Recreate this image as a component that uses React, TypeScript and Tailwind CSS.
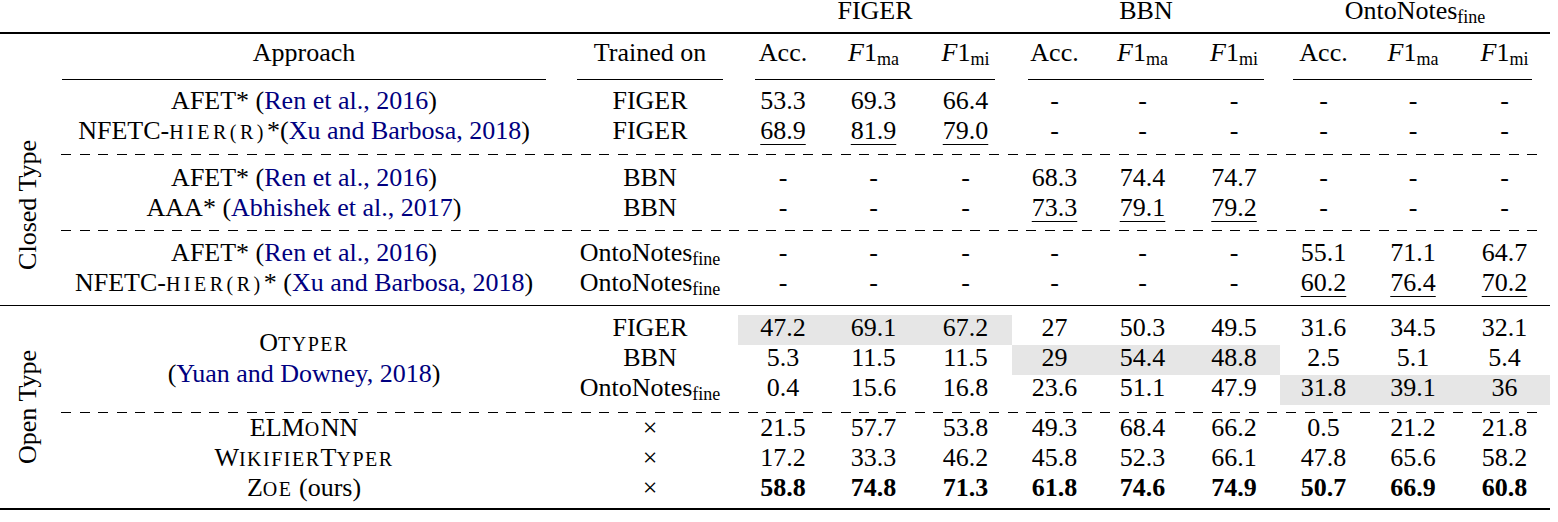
import React from 'react';

// column widths of the nine score columns (FIGER, BBN, OntoNotes_fine)
const NUM_W = ['w-[90px]', 'w-[91px]', 'w-[93px]', 'w-[85px]', 'w-[91px]', 'w-[92px]', 'w-[87px]', 'w-[92px]', 'w-[91px]'];

function Cite({ children }: { children: React.ReactNode }) {
  return <span className="text-[#000080]">{children}</span>;
}

function SC({ children, wide }: { children: React.ReactNode; wide?: boolean }) {
  return <span className={wide ? 'text-[20px] tracking-[3.5px]' : 'text-[20px] tracking-[1.5px]'}>{children}</span>;
}

function Sub({ children }: { children: React.ReactNode }) {
  return <span className="text-[18px] align-[-4px]">{children}</span>;
}

function F1({ sub }: { sub: string }) {
  return (
    <span>
      <span className="italic">F</span>1<Sub>{sub}</Sub>
    </span>
  );
}

const Onto = () => (
  <span>
    OntoNotes<Sub>fine</Sub>
  </span>
);

function Num({ v }: { v: string }) {
  if (v.startsWith('_')) return <span className="underline decoration-1 underline-offset-[5px]">{v.slice(1)}</span>;
  if (v.startsWith('*')) return <span className="font-bold">{v.slice(1)}</span>;
  return <>{v}</>;
}

function Row({ approach, trained, nums, shade }: { approach?: React.ReactNode; trained: React.ReactNode; nums: string[]; shade?: [number, number] }) {
  return (
    <div className="flex h-[30px] leading-[26px] whitespace-nowrap">
      {approach !== undefined && <div className="w-[516px] text-center">{approach}</div>}
      <div className="w-[176px] text-center">{trained}</div>
      {nums.map((v, i) => (
        <div key={i} className={`${NUM_W[i]} text-center ${shade && i >= shade[0] && i < shade[1] ? 'bg-[#e6e6e6]' : ''}`}>
          <Num v={v} />
        </div>
      ))}
    </div>
  );
}

function Dashed({ h, top }: { h: string; top: string }) {
  return (
    <div className={h}>
      <div className={`${top} ml-[15px] w-[1476px] h-px bg-[repeating-linear-gradient(90deg,#000_0px,#000_10px,transparent_10px,transparent_18.56px)]`} />
    </div>
  );
}

const dash = ['-', '-', '-'];

export default function App() {
  return (
    <div className="w-[1550px] bg-white text-black text-[26px] font-['Liberation_Serif',serif]">
      {/* dataset groups */}
      <div className="flex h-[32px] leading-[22px]">
        <div className="w-[738px]" />
        <div className="w-[274px] text-center">FIGER</div>
        <div className="w-[268px] text-center">BBN</div>
        <div className="w-[270px] text-center">
          <Onto />
        </div>
      </div>
      <div className="h-[2px] bg-black" />

      {/* column titles */}
      <div className="pt-[6px] pb-[9px]">
        <div className="flex h-[30px] leading-[26px]">
          <div className="w-[46px]" />
          <div className="w-[516px] text-center">Approach</div>
          <div className="w-[176px] text-center">Trained on</div>
          {[0, 1, 2].map((g) => (
            <React.Fragment key={g}>
              <div className={`${NUM_W[g * 3]} text-center`}>Acc.</div>
              <div className={`${NUM_W[g * 3 + 1]} text-center`}>
                <F1 sub="ma" />
              </div>
              <div className={`${NUM_W[g * 3 + 2]} text-center`}>
                <F1 sub="mi" />
              </div>
            </React.Fragment>
          ))}
        </div>
      </div>
      <div className="flex h-px">
        <div className="w-[46px]" />
        <div className="w-[516px] px-[16px]"><div className="h-px bg-black" /></div>
        <div className="w-[176px] px-[15px]"><div className="h-px bg-black" /></div>
        <div className="w-[274px] px-[17px]"><div className="h-px bg-black" /></div>
        <div className="w-[268px] px-[16px]"><div className="h-px bg-black" /></div>
        <div className="w-[270px] pl-[13px] pr-[18px]"><div className="h-px bg-black" /></div>
      </div>

      {/* closed type */}
      <div className="flex">
        <div className="w-[46px] flex items-center justify-center pl-[10px] pt-[24px]">
          <span className="[writing-mode:vertical-rl] rotate-180 whitespace-nowrap leading-[26px]">Closed Type</span>
        </div>
        <div className="flex flex-col pt-[8px] pb-[5px]">
          <Row approach={<>AFET* (<Cite>Ren et al., 2016</Cite>)</>} trained="FIGER" nums={['53.3', '69.3', '66.4', ...dash, ...dash]} />
          <Row
            approach={<>NFETC-<SC wide>HIER(R)</SC>*(<Cite>Xu and Barbosa, 2018</Cite>)</>}
            trained="FIGER"
            nums={['_68.9', '_81.9', '_79.0', ...dash, ...dash]}
          />
          <Dashed h="h-[17px]" top="mt-[6px]" />
          <Row approach={<>AFET* (<Cite>Ren et al., 2016</Cite>)</>} trained="BBN" nums={[...dash, '68.3', '74.4', '74.7', ...dash]} />
          <Row approach={<>AAA* (<Cite>Abhishek et al., 2017</Cite>)</>} trained="BBN" nums={[...dash, '_73.3', '_79.1', '_79.2', ...dash]} />
          <Dashed h="h-[15px]" top="mt-[5px]" />
          <Row approach={<>AFET* (<Cite>Ren et al., 2016</Cite>)</>} trained={<Onto />} nums={[...dash, ...dash, '55.1', '71.1', '64.7']} />
          <Row
            approach={<>NFETC-<SC wide>HIER(R)</SC>* (<Cite>Xu and Barbosa, 2018</Cite>)</>}
            trained={<Onto />}
            nums={[...dash, ...dash, '_60.2', '_76.4', '_70.2']}
          />
        </div>
      </div>
      <div className="h-px bg-black" />

      {/* open type */}
      <div className="flex">
        <div className="w-[46px] flex items-center justify-center pl-[10px]">
          <span className="[writing-mode:vertical-rl] rotate-180 whitespace-nowrap leading-[26px]">Open Type</span>
        </div>
        <div className="flex flex-col pt-[9px] pb-[3px]">
          <div className="flex">
            <div className="w-[516px] flex flex-col items-center justify-center leading-[29px] pb-[4px]">
              <div>
                O<SC>TYPER</SC>
              </div>
              <div>
                (<Cite>Yuan and Downey, 2018</Cite>)
              </div>
            </div>
            <div className="flex flex-col">
              <Row trained="FIGER" nums={['47.2', '69.1', '67.2', '27', '50.3', '49.5', '31.6', '34.5', '32.1']} shade={[0, 3]} />
              <Row trained="BBN" nums={['5.3', '11.5', '11.5', '29', '54.4', '48.8', '2.5', '5.1', '5.4']} shade={[3, 6]} />
              <Row trained={<Onto />} nums={['0.4', '15.6', '16.8', '23.6', '51.1', '47.9', '31.8', '39.1', '36']} shade={[6, 9]} />
            </div>
          </div>
          <Dashed h="h-[10px]" top="mt-[7px]" />
          <Row
            approach={<>ELM<SC>O</SC>NN</>}
            trained="×"
            nums={['21.5', '57.7', '53.8', '49.3', '68.4', '66.2', '0.5', '21.2', '21.8']}
          />
          <Row
            approach={<>W<SC>IKIFIER</SC>T<SC>YPER</SC></>}
            trained="×"
            nums={['17.2', '33.3', '46.2', '45.8', '52.3', '66.1', '47.8', '65.6', '58.2']}
          />
          <Row
            approach={<>Z<SC>OE</SC> (ours)</>}
            trained="×"
            nums={['*58.8', '*74.8', '*71.3', '*61.8', '*74.6', '*74.9', '*50.7', '*66.9', '*60.8']}
          />
        </div>
      </div>
      <div className="h-[2px] bg-black" />
    </div>
  );
}
